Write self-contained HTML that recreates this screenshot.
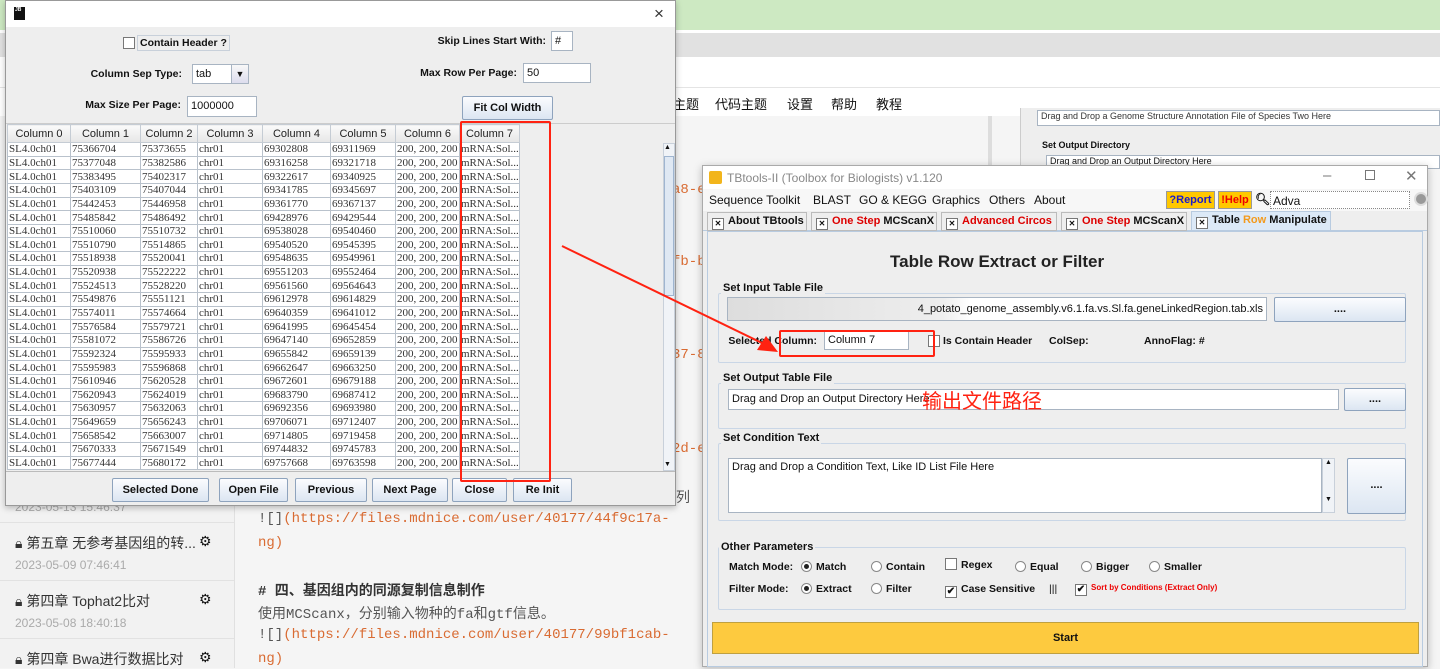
<!DOCTYPE html>
<html><head><meta charset="utf-8"><style>
*{box-sizing:border-box;margin:0;padding:0}
body{width:1440px;height:668px;overflow:hidden;position:relative;background:#f5f5f5;font-family:"Liberation Sans","Noto Sans CJK SC",sans-serif;font-size:11px;color:#111}
.a{position:absolute;white-space:nowrap}
.b{font-weight:bold}
.r{text-align:right}
.btn{position:absolute;border:1px solid #8ea3bd;border-radius:2px;background:linear-gradient(#fbfcfe,#dce6f2);font-weight:bold;font-size:11px;text-align:center;color:#111;white-space:nowrap}
.fld{position:absolute;background:#fff;border:1px solid #a8b4c2;font-size:11px;padding-left:3px;white-space:nowrap;overflow:hidden}
.mono{font-family:"Liberation Mono","Noto Sans CJK SC",monospace}
table{border-collapse:collapse}
td{border:1px solid #b9c2cc;height:13.65px;font-family:"Liberation Serif",serif;font-size:11px;padding-left:1px;white-space:nowrap;overflow:hidden;background:#fff;color:#333}
th{border:1px solid #c5ccd4;height:18px;font-weight:normal;font-size:11px;background:linear-gradient(#fafafa,#e6e6e6);color:#222}
.grp{position:absolute;border:1px solid #c9d6e6;border-radius:2px}
.lg{position:absolute;font-weight:bold;font-size:11px;background:#eee;padding:0 2px;white-space:nowrap}
.rad{display:inline-block;width:11px;height:11px;border:1px solid #888;border-radius:50%;background:#fff;vertical-align:-2px;margin-right:4px}
.rad.on::after{content:"";display:block;width:5px;height:5px;margin:2px;border-radius:50%;background:#222}
.cb{display:inline-block;width:12px;height:12px;border:1px solid #777;background:#fff;vertical-align:-2px;margin-right:4px;font-size:10px;line-height:10px;text-align:center}
.orange{color:#d96b32}
.tab{position:absolute;top:0;height:19px;border:1px solid #bbb;padding:2px 4px;background:#eee;white-space:nowrap;font-weight:bold;font-size:11px;overflow:hidden}
</style></head><body>
<div class="a" style="left:0;top:0;width:1440px;height:30px;background:#cde9c2"></div>
<div class="a" style="left:0;top:30px;width:1440px;height:3px;background:#fff"></div>
<div class="a" style="left:0;top:33px;width:1440px;height:24px;background:#e1e1e1"></div>
<div class="a" style="left:0;top:57px;width:1440px;height:31px;background:#fff;border-bottom:1px solid #e4e4e4"></div>
<div class="a" style="left:0;top:88px;width:1440px;height:28px;background:#fff;font-size:13px">
<span class="a" style="left:673px;top:6px">主题</span><span class="a" style="left:715px;top:6px">代码主题</span><span class="a" style="left:787px;top:6px">设置</span><span class="a" style="left:831px;top:6px">帮助</span><span class="a" style="left:876px;top:6px">教程</span></div>
<div class="a" style="left:0;top:116px;width:235px;height:552px;background:#f2f2f2;border-right:1px solid #e0e0e0"></div>
<div class="a" style="left:988px;top:116px;width:4px;height:380px;background:#ddd"></div>
<div class="a" style="left:1020px;top:108px;width:420px;height:60px;background:#eee;border-left:1px solid #ccc"></div>
<div class="fld" style="left:1037px;top:110px;width:403px;height:16px;font-size:9px;color:#333">Drag and Drop a Genome Structure Annotation File of Species Two Here</div>
<div class="a b" style="left:1042px;top:140px;font-size:9px">Set Output Directory</div>
<div class="fld" style="left:1046px;top:155px;width:394px;height:14px;font-size:9px">Drag and Drop an Output Directory Here</div>
<div class="a" style="left:15px;top:500px;color:#aaa;font-size:12px">2023-05-13 15:46:37</div>
<div class="a" style="left:0;top:522px;width:234px;border-top:1px solid #e2e2e2"></div>
<div class="a" style="left:15px;top:533px;font-size:14px;color:#333">🔒︎ 第五章 无参考基因组的转...</div><div class="a" style="left:199px;top:533px;font-size:14px">⚙</div>
<div class="a" style="left:15px;top:558px;color:#aaa;font-size:12px">2023-05-09 07:46:41</div>
<div class="a" style="left:0;top:580px;width:234px;border-top:1px solid #e2e2e2"></div>
<div class="a" style="left:15px;top:591px;font-size:14px;color:#333">🔒︎ 第四章 Tophat2比对</div><div class="a" style="left:199px;top:591px;font-size:14px">⚙</div>
<div class="a" style="left:15px;top:616px;color:#aaa;font-size:12px">2023-05-08 18:40:18</div>
<div class="a" style="left:0;top:638px;width:234px;border-top:1px solid #e2e2e2"></div>
<div class="a" style="left:15px;top:649px;font-size:14px;color:#333">🔒︎ 第四章 Bwa进行数据比对</div><div class="a" style="left:199px;top:649px;font-size:14px">⚙</div>
<div class="a mono" style="left:258px;top:0;font-size:14px;white-space:nowrap">
<span class="a orange" style="left:414px;top:182px">a8-e</span>
<span class="a orange" style="left:414px;top:254px">fb-b</span>
<span class="a orange" style="left:414px;top:347px">37-8</span>
<span class="a orange" style="left:414px;top:441px">2d-e</span>
<span class="a" style="left:418px;top:487px;color:#555">列</span>
<span class="a" style="left:0;top:511px;color:#555">![]<span class="orange">(https://files.mdnice.com/user/40177/44f9c17a-</span></span>
<span class="a orange" style="left:0;top:535px">ng)</span>
<span class="a b" style="left:0;top:580px;color:#333">#  四、基因组内的同源复制信息制作</span>
<span class="a" style="left:0;top:603px;color:#555">使用MCScanx，分别输入物种的fa和gtf信息。</span>
<span class="a" style="left:0;top:627px;color:#555">![]<span class="orange">(https://files.mdnice.com/user/40177/99bf1cab-</span></span>
<span class="a orange" style="left:0;top:651px">ng)</span>
</div>
<!-- left dialog -->
<div class="a" style="left:5px;top:0;width:671px;height:506px;background:#eee;border:1px solid #999;box-shadow:0 2px 6px rgba(0,0,0,.25)">
<div class="a" style="left:0;top:0;width:669px;height:26px;background:#fff"></div>
<div class="a" style="left:8px;top:6px;width:11px;height:13px;background:#111;color:#fff;font-size:5px;font-weight:bold;line-height:7px;padding-left:1px">JB</div>
<div class="a" style="left:648px;top:3px;font-size:17px;color:#333">×</div>
<span class="a cb" style="left:117px;top:36px"></span><div class="a b" style="left:131px;top:34px;border:1px solid #c8d0da;padding:1px 2px;font-size:10.5px">Contain Header ?</div>
<div class="a b r" style="left:40px;width:136px;top:67px;font-size:10.5px">Column Sep Type:</div>
<div class="fld" style="left:186px;top:63px;width:57px;height:20px;line-height:18px">tab</div>
<div class="a" style="left:225px;top:63px;width:18px;height:20px;background:linear-gradient(#f8f8f8,#dde);border:1px solid #a8b4c2;font-size:9px;text-align:center;line-height:18px">▼</div>
<div class="a b r" style="left:30px;width:145px;top:98px;font-size:10.5px">Max Size Per Page:</div>
<div class="fld" style="left:181px;top:95px;width:70px;height:21px;line-height:19px">1000000</div>
<div class="a b r" style="left:380px;width:160px;top:34px;font-size:10.5px">Skip Lines Start With:</div>
<div class="fld" style="left:545px;top:30px;width:22px;height:20px;line-height:18px">#</div>
<div class="a b r" style="left:360px;width:151px;top:66px;font-size:10.5px">Max Row Per Page:</div>
<div class="fld" style="left:517px;top:62px;width:68px;height:20px;line-height:18px">50</div>
<div class="btn" style="left:456px;top:95px;width:91px;height:24px;line-height:22px">Fit Col Width</div>
<div class="a" style="left:0;top:122px;width:669px;border-top:1px solid #ccc"></div>
<table class="a" style="left:1px;top:123px;width:512px;table-layout:fixed">
<colgroup><col style="width:63px"><col style="width:70px"><col style="width:57px"><col style="width:65px"><col style="width:68px"><col style="width:65px"><col style="width:64px"><col style="width:60px"></colgroup>
<tr><th>Column 0</th><th>Column 1</th><th>Column 2</th><th>Column 3</th><th>Column 4</th><th>Column 5</th><th>Column 6</th><th>Column 7</th></tr>
<tr><td>SL4.0ch01</td><td>75366704</td><td>75373655</td><td>chr01</td><td>69302808</td><td>69311969</td><td>200, 200, 200</td><td>mRNA:Sol...</td></tr>
<tr><td>SL4.0ch01</td><td>75377048</td><td>75382586</td><td>chr01</td><td>69316258</td><td>69321718</td><td>200, 200, 200</td><td>mRNA:Sol...</td></tr>
<tr><td>SL4.0ch01</td><td>75383495</td><td>75402317</td><td>chr01</td><td>69322617</td><td>69340925</td><td>200, 200, 200</td><td>mRNA:Sol...</td></tr>
<tr><td>SL4.0ch01</td><td>75403109</td><td>75407044</td><td>chr01</td><td>69341785</td><td>69345697</td><td>200, 200, 200</td><td>mRNA:Sol...</td></tr>
<tr><td>SL4.0ch01</td><td>75442453</td><td>75446958</td><td>chr01</td><td>69361770</td><td>69367137</td><td>200, 200, 200</td><td>mRNA:Sol...</td></tr>
<tr><td>SL4.0ch01</td><td>75485842</td><td>75486492</td><td>chr01</td><td>69428976</td><td>69429544</td><td>200, 200, 200</td><td>mRNA:Sol...</td></tr>
<tr><td>SL4.0ch01</td><td>75510060</td><td>75510732</td><td>chr01</td><td>69538028</td><td>69540460</td><td>200, 200, 200</td><td>mRNA:Sol...</td></tr>
<tr><td>SL4.0ch01</td><td>75510790</td><td>75514865</td><td>chr01</td><td>69540520</td><td>69545395</td><td>200, 200, 200</td><td>mRNA:Sol...</td></tr>
<tr><td>SL4.0ch01</td><td>75518938</td><td>75520041</td><td>chr01</td><td>69548635</td><td>69549961</td><td>200, 200, 200</td><td>mRNA:Sol...</td></tr>
<tr><td>SL4.0ch01</td><td>75520938</td><td>75522222</td><td>chr01</td><td>69551203</td><td>69552464</td><td>200, 200, 200</td><td>mRNA:Sol...</td></tr>
<tr><td>SL4.0ch01</td><td>75524513</td><td>75528220</td><td>chr01</td><td>69561560</td><td>69564643</td><td>200, 200, 200</td><td>mRNA:Sol...</td></tr>
<tr><td>SL4.0ch01</td><td>75549876</td><td>75551121</td><td>chr01</td><td>69612978</td><td>69614829</td><td>200, 200, 200</td><td>mRNA:Sol...</td></tr>
<tr><td>SL4.0ch01</td><td>75574011</td><td>75574664</td><td>chr01</td><td>69640359</td><td>69641012</td><td>200, 200, 200</td><td>mRNA:Sol...</td></tr>
<tr><td>SL4.0ch01</td><td>75576584</td><td>75579721</td><td>chr01</td><td>69641995</td><td>69645454</td><td>200, 200, 200</td><td>mRNA:Sol...</td></tr>
<tr><td>SL4.0ch01</td><td>75581072</td><td>75586726</td><td>chr01</td><td>69647140</td><td>69652859</td><td>200, 200, 200</td><td>mRNA:Sol...</td></tr>
<tr><td>SL4.0ch01</td><td>75592324</td><td>75595933</td><td>chr01</td><td>69655842</td><td>69659139</td><td>200, 200, 200</td><td>mRNA:Sol...</td></tr>
<tr><td>SL4.0ch01</td><td>75595983</td><td>75596868</td><td>chr01</td><td>69662647</td><td>69663250</td><td>200, 200, 200</td><td>mRNA:Sol...</td></tr>
<tr><td>SL4.0ch01</td><td>75610946</td><td>75620528</td><td>chr01</td><td>69672601</td><td>69679188</td><td>200, 200, 200</td><td>mRNA:Sol...</td></tr>
<tr><td>SL4.0ch01</td><td>75620943</td><td>75624019</td><td>chr01</td><td>69683790</td><td>69687412</td><td>200, 200, 200</td><td>mRNA:Sol...</td></tr>
<tr><td>SL4.0ch01</td><td>75630957</td><td>75632063</td><td>chr01</td><td>69692356</td><td>69693980</td><td>200, 200, 200</td><td>mRNA:Sol...</td></tr>
<tr><td>SL4.0ch01</td><td>75649659</td><td>75656243</td><td>chr01</td><td>69706071</td><td>69712407</td><td>200, 200, 200</td><td>mRNA:Sol...</td></tr>
<tr><td>SL4.0ch01</td><td>75658542</td><td>75663007</td><td>chr01</td><td>69714805</td><td>69719458</td><td>200, 200, 200</td><td>mRNA:Sol...</td></tr>
<tr><td>SL4.0ch01</td><td>75670333</td><td>75671549</td><td>chr01</td><td>69744832</td><td>69745783</td><td>200, 200, 200</td><td>mRNA:Sol...</td></tr>
<tr><td>SL4.0ch01</td><td>75677444</td><td>75680172</td><td>chr01</td><td>69757668</td><td>69763598</td><td>200, 200, 200</td><td>mRNA:Sol...</td></tr>
</table>
<div class="a" style="left:657px;top:142px;width:12px;height:328px;background:#f0f3f7;border:1px solid #c8d0da"></div>
<div class="a" style="left:658px;top:143px;font-size:7px">▲</div>
<div class="a" style="left:658px;top:460px;font-size:7px">▼</div>
<div class="a" style="left:658px;top:155px;width:10px;height:140px;background:#dfe8f3;border:1px solid #9fb5d0"></div>
<div class="a" style="left:0;top:470px;width:669px;border-top:1px solid #bbb"></div>
<div class="btn" style="left:106px;top:477px;width:97px;height:24px;line-height:22px">Selected Done</div>
<div class="btn" style="left:213px;top:477px;width:69px;height:24px;line-height:22px">Open File</div>
<div class="btn" style="left:289px;top:477px;width:72px;height:24px;line-height:22px">Previous</div>
<div class="btn" style="left:366px;top:477px;width:76px;height:24px;line-height:22px">Next Page</div>
<div class="btn" style="left:446px;top:477px;width:55px;height:24px;line-height:22px">Close</div>
<div class="btn" style="left:507px;top:477px;width:59px;height:24px;line-height:22px">Re Init</div>
</div>
<!-- TBtools window -->
<div class="a" style="left:702px;top:165px;width:726px;height:502px;background:#eee;border:1px solid #aaa;box-shadow:0 2px 8px rgba(0,0,0,.25)">
<div class="a" style="left:0;top:0;width:724px;height:23px;background:#fff"></div>
<div class="a" style="left:6px;top:5px;width:13px;height:13px;background:#f2b51c;border-radius:2px"></div>
<div class="a" style="left:24px;top:5px;font-size:12px;color:#888">TBtools-II (Toolbox for Biologists) v1.120</div>
<div class="a" style="left:620px;top:1px;font-size:15px;color:#777">–</div>
<div class="a" style="left:662px;top:4px;width:10px;height:10px;border:1px solid #777"></div>
<div class="a" style="left:702px;top:1px;font-size:15px;color:#777">✕</div>
<div class="a" style="left:0;top:23px;width:724px;height:22px;background:#f7f7f7;font-size:12px">
<span class="a" style="left:6px;top:4px">Sequence Toolkit</span><span class="a" style="left:110px;top:4px">BLAST</span><span class="a" style="left:156px;top:4px">GO &amp; KEGG</span><span class="a" style="left:229px;top:4px">Graphics</span><span class="a" style="left:286px;top:4px">Others</span><span class="a" style="left:331px;top:4px">About</span>
<span class="a b" style="left:463px;top:2px;width:49px;height:18px;background:#ffc800;border:1px solid #999;color:#1a1acc;padding:2px 0;font-size:11px;text-align:center">?Report</span>
<span class="a b" style="left:515px;top:2px;width:34px;height:18px;background:#ffc800;border:1px solid #999;color:#e00;padding:2px 0;font-size:11px;text-align:center">!Help</span>
<span class="a b" style="left:552px;top:3px">🔍︎</span>
<span class="a" style="left:567px;top:2px;width:140px;height:18px;border:1px dotted #888;background:#fff;padding:2px">Adva</span>
<span class="a" style="left:711px;top:3px;width:14px;height:14px;border-radius:50%;background:#999;border:2px solid #ddd"></span></div>
<div class="a" style="left:0;top:46px;width:724px;height:19px;border-bottom:1px solid #b8cbe0">
<span class="tab" style="left:4px;width:100px"><span class="cb" style="font-size:8px">✕</span>About TBtools</span>
<span class="tab" style="left:108px;width:126px"><span class="cb" style="font-size:8px">✕</span><span style="color:#d00">One Step</span> MCScanX</span>
<span class="tab" style="left:238px;width:116px;color:#d00"><span class="cb" style="font-size:8px;color:#111">✕</span>Advanced Circos</span>
<span class="tab" style="left:358px;width:126px"><span class="cb" style="font-size:8px">✕</span><span style="color:#d00">One Step</span> MCScanX</span>
<span class="tab" style="left:488px;top:-1px;width:140px;height:20px;border-color:#b8cbe0;background:#dce9f7"><span class="cb" style="font-size:8px">✕</span>Table <span style="color:#f39a1c">Row</span> Manipulate</span></div>
<div class="a" style="left:4px;top:65px;width:716px;height:436px;border:1px solid #b8cbe0;background:#eee"></div>
<div class="a b" style="left:187px;top:86px;font-size:17px;color:#222">Table Row Extract or Filter</div>
<div class="grp" style="left:15px;top:127px;width:688px;height:70px"></div><div class="lg" style="left:18px;top:116px">Set Input Table File</div>
<div class="fld" style="left:24px;top:131px;width:540px;height:24px;line-height:22px;text-align:right;padding-right:3px;background:linear-gradient(90deg,#ddd 0,#eee 40%,#fff 45%)">4_potato_genome_assembly.v6.1.fa.vs.Sl.fa.geneLinkedRegion.tab.xls</div>
<div class="btn" style="left:571px;top:131px;width:132px;height:25px;line-height:22px">....</div>
<div class="a b r" style="left:10px;width:104px;top:169px;font-size:10.5px">Selected Column:</div>
<div class="fld" style="left:121px;top:165px;width:85px;height:19px;line-height:17px">Column 7</div>
<span class="a cb" style="left:225px;top:169px"></span><div class="a b" style="left:240px;top:169px;font-size:10.5px">Is Contain Header</div>
<div class="a b" style="left:346px;top:169px;font-size:10.5px">ColSep:</div>
<div class="a b" style="left:441px;top:169px;font-size:10.5px">AnnoFlag: #</div>
<div class="grp" style="left:15px;top:217px;width:688px;height:46px"></div><div class="lg" style="left:18px;top:206px">Set Output Table File</div>
<div class="fld" style="left:25px;top:223px;width:611px;height:21px;line-height:19px">Drag and Drop an Output Directory Here</div>
<div class="btn" style="left:641px;top:222px;width:62px;height:23px;line-height:20px">....</div>
<div class="grp" style="left:15px;top:277px;width:688px;height:78px"></div><div class="lg" style="left:18px;top:266px">Set Condition Text</div>
<div class="fld" style="left:25px;top:292px;width:594px;height:55px;padding-top:2px">Drag and Drop a Condition Text, Like ID List File Here</div>
<div class="a" style="left:619px;top:292px;width:13px;height:55px;background:#f0f3f7;border:1px solid #c8d0da;font-size:7px;text-align:center">▲<div style="margin-top:30px">▼</div></div>
<div class="btn" style="left:644px;top:292px;width:59px;height:56px;line-height:52px">....</div>
<div class="grp" style="left:15px;top:381px;width:688px;height:63px"></div><div class="lg" style="left:16px;top:375px">Other Parameters</div>
<div class="a b" style="left:26px;top:395px;font-size:10.5px">Match Mode:<span class="a" style="left:72px"><span class="rad on"></span>Match</span><span class="a" style="left:142px"><span class="rad"></span>Contain</span><span class="a" style="left:216px;top:-3px"><span class="cb"></span>Regex</span><span class="a" style="left:286px"><span class="rad"></span>Equal</span><span class="a" style="left:352px"><span class="rad"></span>Bigger</span><span class="a" style="left:420px"><span class="rad"></span>Smaller</span></div>
<div class="a b" style="left:26px;top:417px;font-size:10.5px">Filter Mode:<span class="a" style="left:72px"><span class="rad on"></span>Extract</span><span class="a" style="left:142px"><span class="rad"></span>Filter</span><span class="a" style="left:216px"><span class="cb">✔</span>Case Sensitive</span><span class="a" style="left:320px;font-weight:normal">|||</span><span class="a" style="left:346px;font-size:8px;color:#e00"><span class="cb" style="color:#111">✔</span>Sort by Conditions (Extract Only)</span></div>
<div class="a b" style="left:9px;top:456px;width:707px;height:32px;background:#fdca3f;border:1px solid #bfa040;text-align:center;line-height:30px">Start</div>
</div>
<div class="a" style="left:460px;top:121px;width:91px;height:361px;border:2px solid #f21;border-radius:2px"></div>
<div class="a" style="left:779px;top:330px;width:156px;height:27px;border:2px solid #f21;border-radius:2px"></div>
<svg class="a" style="left:0;top:0" width="1440" height="668"><line x1="562" y1="246" x2="764" y2="344" stroke="#f21" stroke-width="2"/><polygon points="778,352 757,350 766,336" fill="#f21"/></svg>
<div class="a" style="left:922px;top:385px;font-size:20px;color:#f21;font-family:'Noto Sans CJK SC',sans-serif">输出文件路径</div>
</body></html>
